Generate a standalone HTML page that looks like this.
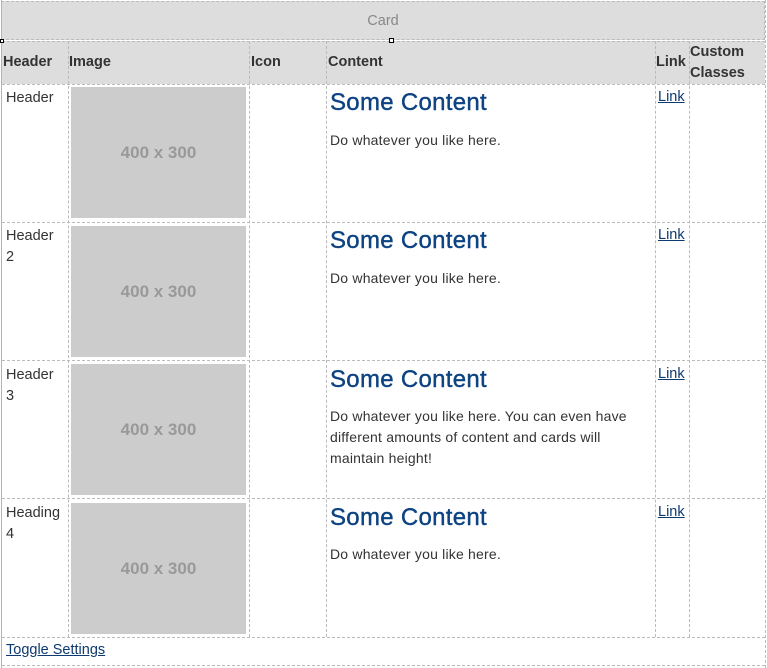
<!DOCTYPE html>
<html><head><meta charset="utf-8"><style>
*{box-sizing:border-box;margin:0;padding:0}
body{width:767px;height:668px;background:#fff;font-family:"Liberation Sans",sans-serif;color:#333;position:relative;overflow:hidden}
.a{position:absolute}
.bar{left:1px;top:1px;width:764px;height:39px;background:#ddd;border:1px dashed #bbb;text-align:center;line-height:38px;color:#888;font-size:14.5px}
.hdr{left:2px;top:41px;width:763px;height:43px;background:#ddd}
.vl{width:0;border-left:1px dashed #bbb}
.hl{height:0;border-top:1px dashed #bbb}
.th{font-weight:bold;font-size:14.5px;color:#333}
.img{background:#ccc;color:#999;font-size:17px;font-weight:bold;text-align:center;width:175px;height:131px;line-height:131px;left:71px}
.h2{color:#0d4382;font-size:24px;left:330px;letter-spacing:0.3px;-webkit-text-stroke:0.4px #0d4382}
.p{font-size:14px;left:330px;line-height:21px;width:305px;letter-spacing:0.2px}
.lk{left:658px;font-size:14.5px;color:#0d3a70;text-decoration:underline}
.rh{left:6px;font-size:14.5px;line-height:21px}
</style></head><body>
<div class="a bar">Card</div>
<div class="a hdr"></div>
<div class="a vl" style="left:1px;top:0;height:668px;border-left:1px solid #7cc"></div>
<div class="a vl" style="left:765px;top:0;height:668px"></div>
<div class="a hl" style="left:2px;top:41px;width:763px"></div>
<div class="a hl" style="left:2px;top:84px;width:763px"></div>
<div class="a hl" style="left:2px;top:222px;width:763px"></div>
<div class="a hl" style="left:2px;top:360px;width:763px"></div>
<div class="a hl" style="left:2px;top:498px;width:763px"></div>
<div class="a hl" style="left:2px;top:637px;width:763px"></div>
<div class="a hl" style="left:2px;top:665px;width:763px"></div>
<div class="a vl" style="left:68px;top:41px;height:596px"></div>
<div class="a vl" style="left:249px;top:41px;height:596px"></div>
<div class="a vl" style="left:326px;top:41px;height:596px"></div>
<div class="a vl" style="left:655px;top:41px;height:596px"></div>
<div class="a vl" style="left:689px;top:41px;height:596px"></div>
<div class="a" style="left:0;top:39px;width:4px;height:4px;border:1px solid #000;background:#fff"></div>
<div class="a" style="left:389px;top:38px;width:5px;height:5px;border:1px solid #000;background:#fff"></div>
<div class="a th" style="left:3px;top:54px">Header</div>
<div class="a th" style="left:69px;top:54px">Image</div>
<div class="a th" style="left:251px;top:54px">Icon</div>
<div class="a th" style="left:328px;top:54px">Content</div>
<div class="a th" style="left:656px;top:54px">Link</div>
<div class="a th" style="left:690px;top:42px;line-height:21px">Custom<br>Classes</div>

<div class="a rh" style="top:88px">Header</div>
<div class="a img" style="top:87px">400 x 300</div>
<div class="a h2" style="top:89px">Some Content</div>
<div class="a p" style="top:130px">Do whatever you like here.</div>
<div class="a lk" style="top:89px">Link</div>

<div class="a rh" style="top:226px">Header<br>2</div>
<div class="a img" style="top:226px">400 x 300</div>
<div class="a h2" style="top:227px">Some Content</div>
<div class="a p" style="top:268px">Do whatever you like here.</div>
<div class="a lk" style="top:227px">Link</div>

<div class="a rh" style="top:365px">Header<br>3</div>
<div class="a img" style="top:364px">400 x 300</div>
<div class="a h2" style="top:366px">Some Content</div>
<div class="a p" style="top:406px">Do whatever you like here. You can even have different amounts of content and cards will maintain height!</div>
<div class="a lk" style="top:366px">Link</div>

<div class="a rh" style="top:503px">Heading<br>4</div>
<div class="a img" style="top:503px">400 x 300</div>
<div class="a h2" style="top:504px">Some Content</div>
<div class="a p" style="top:544px">Do whatever you like here.</div>
<div class="a lk" style="top:504px">Link</div>

<div class="a lk" style="left:6px;top:642px">Toggle Settings</div>
</body></html>
